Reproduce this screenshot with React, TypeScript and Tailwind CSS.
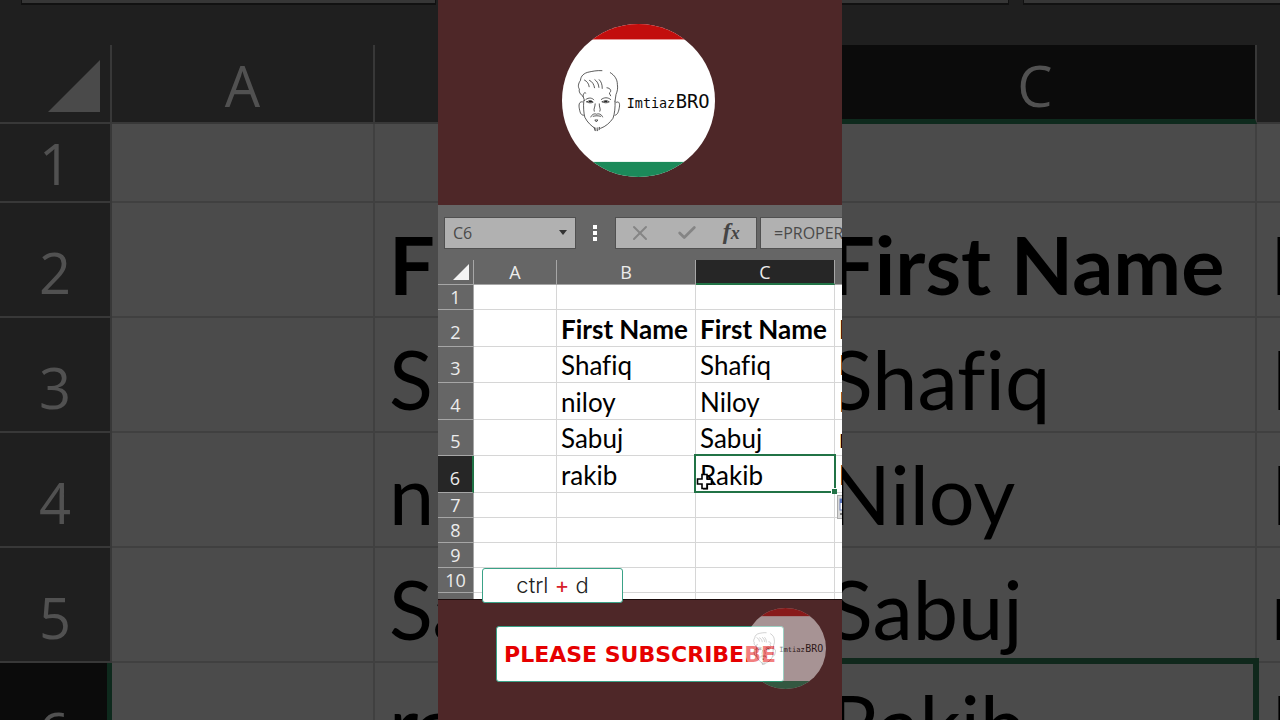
import { Check, X } from "lucide-react";

type Row = { id: number; tall?: boolean; b?: string; c?: string; d?: string; bold?: boolean };

const ROWS: Row[] = [
  { id: 1 },
  { id: 2, tall: true, b: "First Name", c: "First Name", d: "L", bold: true },
  { id: 3, tall: true, b: "Shafiq", c: "Shafiq", d: "I" },
  { id: 4, tall: true, b: "niloy", c: "Niloy", d: "I" },
  { id: 5, tall: true, b: "Sabuj", c: "Sabuj", d: "r" },
  { id: 6, tall: true, b: "rakib", c: "Rakib", d: "I" },
  { id: 7 },
  { id: 8 },
  { id: 9 },
  { id: 10 },
  { id: 11 },
];

const SMALL = {
  table: "w-[600px]",
  cols: ["w-[36px]", "w-[83px]", "w-[139px]", "w-[139px]", ""],
  head: "h-[25px] text-[18px] leading-[24px] font-normal bg-[#666666] text-[#ececec] border-r border-b border-[#a6a6a6]",
  headActive: "h-[25px] pt-px text-[18px] leading-[22px] font-normal bg-[#262626] text-[#ececec] border-r border-r-[#a6a6a6] border-b-2 border-b-[#217346]",
  corner: "mr-1 mb-1 ml-auto size-4",
  cornerFill: "#f4f4f4",
  num: "text-[18px] leading-[24px] font-normal bg-[#666666] text-[#ececec] border-r border-b border-[#a6a6a6]",
  numActive: "text-[18px] leading-[24px] font-normal bg-[#262626] text-[#ececec] border-b border-b-[#a6a6a6] border-r-2 border-r-[#217346]",
  numTall: "pb-[2px]",
  numShort: "",
  short: "h-[25px]",
  tallEven: "h-[37px]",
  tallOdd: "h-[36px]",
  cell: "bg-white text-black border-r border-b border-[#d6d6d6] pl-1 pb-px text-[26px] leading-[32px]",
  outline: "-top-[2px] -left-[2px] -right-[2px] -bottom-[1px] border-2 border-[#217346]",
};

const LARGE: typeof SMALL = {
  table: "w-[1500px]",
  cols: ["w-[112px]", "w-[263px]", "w-[440px]", "w-[442px]", ""],
  head: "h-[79px] pt-[2px] text-[56px] leading-[72px] font-normal bg-[#1f1f1f] text-[#515151] border-r-2 border-b-2 border-[#383838]",
  headActive: "h-[79px] pt-[6px] text-[56px] leading-[68px] font-normal bg-[#0b0b0b] text-[#515151] border-r-2 border-r-[#383838] border-b-[5px] border-b-[#0e2a1d]",
  corner: "mr-[10px] mb-[10px] ml-auto size-[52px]",
  cornerFill: "#4a4a4a",
  num: "text-[56px] leading-[72px] font-normal bg-[#1f1f1f] text-[#515151] border-r-2 border-b-2 border-[#383838]",
  numActive: "text-[56px] leading-[72px] font-normal bg-[#0b0b0b] text-[#515151] border-b-2 border-b-[#383838] border-r-[5px] border-r-[#0e2a1d]",
  numTall: "pb-[8px]",
  numShort: "pb-[2px]",
  short: "h-[79px]",
  tallEven: "h-[115px]",
  tallOdd: "h-[115px]",
  cell: "bg-[#4b4b4b] text-black border-r-2 border-b-2 border-[#404040] pl-[14px] text-[81px] leading-[104px]",
  outline: "-top-[5px] -left-[5px] -right-[4px] -bottom-[4px] border-[6px] border-[#10281c]",
};

function Sheet({ s, rows, live }: { s: typeof SMALL; rows: Row[]; live?: boolean }) {
  return (
    <table className={`table-fixed border-separate border-spacing-0 [font-variant-ligatures:none] ${s.table}`}>
      <colgroup>
        {s.cols.map((w, i) => (
          <col key={i} className={w} />
        ))}
      </colgroup>
      <thead className="font-['Open_Sans',sans-serif]">
        <tr>
          <td className={`${s.head} align-bottom`}>
            <svg viewBox="0 0 16 16" className={s.corner}>
              <path d="M16 0V16H0Z" fill={s.cornerFill} />
            </svg>
          </td>
          {["A", "B", "C", "D"].map((col) => (
            <th key={col} scope="col" className={col === "C" ? s.headActive : s.head}>
              {col}
            </th>
          ))}
        </tr>
      </thead>
      <tbody>
        {rows.map((row) => {
          const height = !row.tall ? s.short : row.id % 2 ? s.tallOdd : s.tallEven;
          const cell = `${s.cell} ${row.bold ? "font-bold" : ""} whitespace-nowrap align-bottom`;
          return (
            <tr key={row.id} className={height}>
              <th
                scope="row"
                className={`font-['Open_Sans',sans-serif] align-bottom ${row.id === 6 ? s.numActive : s.num} ${row.tall ? s.numTall : s.numShort}`}
              >
                {row.id}
              </th>
              <td className={cell} />
              <td className={cell}>{row.b}</td>
              <td className={`${cell} relative`}>
                {row.c}
                {row.id === 6 && (
                  <span className={`absolute z-10 ${s.outline}`}>
                    {live && (
                      <span className="absolute -right-[3px] -bottom-[3px] size-[6px] border-t border-l border-white bg-[#217346]" />
                    )}
                  </span>
                )}
                {row.id === 6 && live && <CellCursor />}
              </td>
              <td className={`${cell} relative`}>
                {row.d}
                {row.id === 7 && live && <FillOptions />}
              </td>
            </tr>
          );
        })}
      </tbody>
    </table>
  );
}

function CellCursor() {
  return (
    <svg viewBox="0 0 17 17" className="absolute top-[17px] left-0 z-20 size-[17px]">
      <path
        d="M6 1.5h5V6h4.500v5H11v4.500H6V11H1.500V6H6Z"
        fill="#fff"
        stroke="#000"
        strokeWidth="1.600"
      />
      <path d="M11.500 3v3.500H16v5h-4.500V16H7" fill="none" stroke="#000" strokeWidth="1.200" />
    </svg>
  );
}

function FillOptions() {
  return (
    <svg viewBox="0 0 24 24" className="absolute top-[2px] left-[2px] z-10 size-6">
      <rect x=".5" y=".5" width="23" height="23" fill="#d9d9d9" stroke="#ababab" />
      <rect x="3" y="4" width="11" height="11" fill="#fff" stroke="#6a7fb5" />
      <path d="M3 4h11v4H3Z" fill="#5b74b8" />
      <path d="M3 19h2M7 19h2M11 19h2" stroke="#777" strokeWidth="2" />
    </svg>
  );
}

function Logo({ className }: { className: string }) {
  return (
    <svg viewBox="67 42 456 456" className={className} role="img" aria-label="Imtiaz BRO">
      <clipPath id="disc">
        <circle cx="295" cy="270" r="228" />
      </clipPath>
      <g clipPath="url(#disc)">
        <rect x="67" y="42" width="456" height="456" fill="#fff" />
        <rect x="67" y="42" width="456" height="46" fill="#c20e0d" />
        <rect x="67" y="453" width="456" height="45" fill="#1b8a5a" />
      </g>
      <g fill="none" stroke="#222" strokeWidth="2.200" strokeLinecap="round" strokeLinejoin="round">
        {/* hair */}
        <path d="M186 181C170 180 158 183 148 185C132 188 123 197 122 210C115 220 114 230 119 236C116 244 122 252 130 258L134 270" />
        <path d="M211 187C224 195 232 207 232 222C234 233 232 243 228 252L225 272" />
        <path d="M134 209C142 213 147 220 148 229M149 210C158 214 162 222 164 232M165 208C172 213 176 220 177 231M178 208C184 214 187 222 187 234" />
        <path d="M130 258C130 250 133 244 138 248M201 232C212 233 216 242 208 248L212 256" />
        {/* ears and jaw */}
        <path d="M128 274C119 272 117 281 118 290C120 303 122 314 131 314" />
        <path d="M228 276C237 270 240 279 238 290C236 302 233 313 225 314" />
        <path d="M132 270C130 290 132 308 135 320C143 336 154 345 164 352M225 272C226 290 224 309 219 323C209 337 198 347 182 353" />
        {/* eyes */}
        <path d="M138 267C147 260 157 262 162 268M184 267C192 260 204 260 212 267" />
        <path d="M141 274C148 269 155 269 160 275C153 278 147 278 141 274ZM187 274C194 269 201 269 208 274C201 278 194 278 187 274Z" />
        <path d="M149 273H154M195 273H200" strokeWidth="5" />
        {/* nose, moustache, chin */}
        <path d="M166 280C166 290 160 295 163 302M180 302C184 296 177 290 178 280" />
        <path d="M153 319C156 311 164 308 170 311C177 308 185 311 188 319M160 317C167 315 175 315 182 317" />
        <path d="M166 328H174L170 333ZM163 351L165 359M168 352V360M174 351L173 360M179 350L178 357" />
      </g>
      <g fill="#0a0a0a" fontFamily="DejaVu Sans Mono, monospace">
        <text x="260" y="291" fontSize="40">
          Imtiaz
        </text>
        <text x="406" y="291" fontSize="56">
          BRO
        </text>
      </g>
    </svg>
  );
}

function FormulaBar() {
  return (
    <div className="flex h-[55px] items-center bg-[#666666] pl-[6px] font-['Open_Sans',sans-serif]">
      <button className="flex h-8 w-[132px] shrink-0 items-center justify-between border border-[#505050] bg-[#b1b1b1] px-2 text-base text-[#4a4a4a]">
        C6
        <svg viewBox="0 0 8 5" className="h-[5px] w-2">
          <path d="M0 0h8L4 5Z" fill="#333" />
        </svg>
      </button>
      <div className="mx-[17px] flex shrink-0 flex-col gap-[2px]">
        <span className="size-[4px] bg-white" />
        <span className="size-[4px] bg-white" />
        <span className="size-[4px] bg-white" />
      </div>
      <div className="ml-px flex h-8 w-[142px] shrink-0 items-center justify-around border border-[#505050] bg-[#b1b1b1] pr-1 text-[#858585]">
        <button aria-label="Cancel">
          <X size={24} strokeWidth={2} />
        </button>
        <button aria-label="Enter">
          <Check size={22} strokeWidth={3} />
        </button>
        <button
          aria-label="Insert function"
          className="font-['Liberation_Serif',serif] text-2xl leading-6 font-bold text-[#444444] italic"
        >
          f<span className="text-lg">x</span>
        </button>
      </div>
      <input
        aria-label="Formula"
        defaultValue="=PROPER(B6)"
        className="ml-[3px] h-8 w-[300px] shrink-0 border border-[#505050] bg-[#b1b1b1] pl-[13px] text-base text-[#4a4a4a] outline-none"
      />
    </div>
  );
}

export default function App() {
  return (
    <div className="grid h-screen grid-cols-1 grid-rows-1 overflow-hidden bg-[#1f1f1f]">
      <div aria-hidden="true" className="col-start-1 row-start-1 min-h-0 overflow-hidden font-['Lato',sans-serif]">
        <div className="flex h-[45px] items-start pl-[21px]">
          <div className="h-[5px] w-[415px] shrink-0 border-x border-b-2 border-[#111111] bg-[#363636]" />
          <div className="ml-[129px] h-[5px] w-[444px] shrink-0 border-x border-b-2 border-[#111111] bg-[#363636]" />
          <div className="ml-[14px] h-[5px] flex-1 border-l border-b-2 border-[#111111] bg-[#363636]" />
        </div>
        <Sheet s={LARGE} rows={ROWS.slice(0, 6)} />
      </div>

      <main className="relative z-30 col-start-1 row-start-1 mx-auto flex min-h-0 w-[404px] flex-col overflow-hidden bg-[#4e2728] font-['Lato',sans-serif]">
        <header className="flex h-[205px] shrink-0 justify-center pt-6 pr-[3px]">
          <Logo className="size-[153px]" />
        </header>

        <section className="h-[395px] shrink-0 overflow-hidden border-b border-[#1c0c0c]">
          <FormulaBar />
          <Sheet s={SMALL} rows={ROWS} live />
        </section>

        <div className="absolute top-[568px] left-[44px] z-20 flex h-[35px] w-[141px] items-center justify-center rounded-[3px] border border-[#3aa287] bg-white text-[22px] text-[#222222]">
          <p className="font-['Inter',sans-serif] font-light">
            ctrl <span className="font-normal text-[#d8202a]">+</span> d
          </p>
        </div>

        <footer className="flex flex-1 items-start pt-[26px] pl-[58px]">
          <button className="h-[56px] w-[288px] rounded-[3px] border border-[#3aa287] bg-white font-['DejaVu_Sans',sans-serif] text-[22px] font-bold whitespace-nowrap text-[#e60000]">
            PLEASE SUBSCRIBEBE
          </button>
        </footer>
        <Logo className="absolute top-[608px] left-[307px] size-[81px] opacity-50" />
      </main>
    </div>
  );
}
